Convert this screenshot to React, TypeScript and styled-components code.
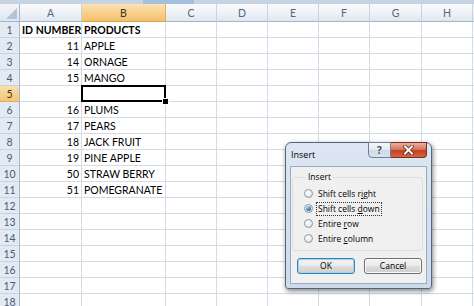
import React from "react";
import styled, { createGlobalStyle } from "styled-components";

const GlobalStyle = createGlobalStyle`
  html, body {
    margin: 0;
    padding: 0;
    background: #fff;
    overflow: hidden;
  }
`;

const COL_WIDTHS = [62, 84, 51, 51, 51, 51, 52, 51];
const LETTERS = ["A", "B", "C", "D", "E", "F", "G", "H"];
const ROW_COUNT = 18;

const DATA: Record<number, [string, string]> = {
  1: ["ID NUMBER", "PRODUCTS"],
  2: ["11", "APPLE"],
  3: ["14", "ORNAGE"],
  4: ["15", "MANGO"],
  6: ["16", "PLUMS"],
  7: ["17", "PEARS"],
  8: ["18", "JACK FRUIT"],
  9: ["19", "PINE APPLE"],
  10: ["50", "STRAW BERRY"],
  11: ["51", "POMEGRANATE"],
};

const Page = styled.div`
  position: relative;
  width: 474px;
  height: 306px;
  overflow: hidden;
  background: #fff;
  font-family: Lato, "Liberation Sans", sans-serif;
`;

const TopStrip = styled.div`
  height: 4px;
  display: flex;
  padding-left: 143px;
  background: #c8d3e1;
`;

const StripMark = styled.div`
  width: 51px;
  background: #a5bfdf;
`;

const Sheet = styled.div`
  display: grid;
  grid-template-columns: 20px ${COL_WIDTHS.map((w) => `${w}px`).join(" ")} 1fr;
  grid-template-rows: 18px;
  grid-auto-rows: 16px;
`;

const Corner = styled.div`
  box-sizing: border-box;
  background: linear-gradient(180deg, #f3f6fb 0%, #dfe6f0 100%);
  border-right: 1px solid #9eb6ce;
  border-bottom: 1px solid #9eb6ce;
  display: flex;
  align-items: flex-end;
  justify-content: flex-end;
  padding: 0 2px 2px 0;
`;

const ColHeader = styled.div<{ $active?: boolean }>`
  box-sizing: border-box;
  background: ${(p) =>
    p.$active
      ? "linear-gradient(180deg, #fbe2b4 0%, #f7cf88 55%, #f3c170 100%)"
      : "linear-gradient(180deg, #f8fafc 0%, #eef2f7 55%, #e1e7ef 100%)"};
  border-right: 1px solid ${(p) => (p.$active ? "#e0b060" : "#c9d3df")};
  border-bottom: 1px solid ${(p) => (p.$active ? "#d9a24a" : "#9eb6ce")};
  color: ${(p) => (p.$active ? "#3d3321" : "#55657b")};
  font-size: 10.5px;
  line-height: 18px;
  text-align: center;
`;

const RowHeader = styled.div<{ $active?: boolean }>`
  box-sizing: border-box;
  background: ${(p) =>
    p.$active
      ? "linear-gradient(180deg, #fbe0ae 0%, #f4c576 100%)"
      : "#e3eaf4"};
  border-right: 1px solid #9eb6ce;
  border-bottom: 1px solid ${(p) => (p.$active ? "#e0b060" : "#c6d3e3")};
  color: ${(p) => (p.$active ? "#3d3321" : "#4b5b71")};
  font-size: 10.5px;
  line-height: 16px;
  text-align: center;
`;

const Cell = styled.div<{ $right?: boolean; $bold?: boolean; $selected?: boolean }>`
  box-sizing: border-box;
  border-right: 1px solid #d4dae6;
  border-bottom: 1px solid #d4dae6;
  padding: 0 2px;
  font-size: 10.5px;
  line-height: 16px;
  color: #000;
  white-space: nowrap;
  text-align: ${(p) => (p.$right ? "right" : "left")};
  font-weight: ${(p) => (p.$bold ? 700 : 400)};
  position: ${(p) => (p.$selected ? "relative" : "static")};
  z-index: ${(p) => (p.$selected ? 2 : "auto")};

  ${(p) =>
    p.$selected &&
    `
    &::after {
      content: "";
      position: absolute;
      top: -1px;
      left: -1px;
      right: -1px;
      bottom: -1px;
      border: 2px solid #000;
    }
    &::before {
      content: "";
      position: absolute;
      right: -4px;
      bottom: -4px;
      width: 5px;
      height: 5px;
      background: #000;
      border: 1px solid #fff;
      z-index: 3;
    }
  `}
`;

/* ---------- dialog ---------- */

const Dialog = styled.div`
  position: absolute;
  left: 285px;
  top: 142px;
  width: 147px;
  box-sizing: border-box;
  border: 1px solid #56677d;
  border-radius: 6px 6px 3px 3px;
  background: linear-gradient(180deg, #dde7f3 0%, #cddaea 100%);
  padding: 0 4px 4px;
  box-shadow: 1px 2px 5px rgba(0, 0, 0, 0.5);
  font-family: "Open Sans", "Noto Sans", sans-serif;
  font-size: 8.5px;
  color: #000;
`;

const TitleBar = styled.div`
  height: 23px;
  display: flex;
  align-items: flex-start;
`;

const Title = styled.div`
  line-height: 23px;
  padding-left: 1px;
  font-size: 9px;
`;

const CaptionButtons = styled.div`
  margin-left: auto;
  margin-top: -1px;
  display: flex;
`;

const CapButton = styled.div<{ $kind: "help" | "close" }>`
  width: ${(p) => (p.$kind === "help" ? 23 : 36)}px;
  height: 16px;
  box-sizing: border-box;
  display: flex;
  align-items: center;
  justify-content: center;
  border: 1px solid ${(p) => (p.$kind === "help" ? "#6f7f95" : "#7b2c1d")};
  border-left-width: ${(p) => (p.$kind === "help" ? 1 : 0)}px;
  border-radius: ${(p) => (p.$kind === "help" ? "0 0 0 4px" : "0 0 4px 0")};
  background: ${(p) =>
    p.$kind === "help"
      ? "linear-gradient(180deg, #f4f7fb 0%, #e2e9f2 50%, #cfdae8 51%, #d9e3ef 100%)"
      : "linear-gradient(180deg, #eab0a0 0%, #d8765c 45%, #c3401f 55%, #d66444 100%)"};
  color: #3c4a5c;
  font-size: 10px;
  font-weight: 700;
  line-height: 1;
`;

const Client = styled.div`
  height: 118px;
  box-sizing: border-box;
  border: 1px solid #9aabc0;
  background: #f0f0f0;
  display: flex;
  flex-direction: column;
  padding: 4px 3px 0 0;
`;

const Group = styled.fieldset`
  margin: 0 0 0 1px;
  padding: 3px 0 4px 11px;
  border: 1px solid #d5dfe5;
  border-radius: 3px;
  min-width: 0;
`;

const GroupLegend = styled.legend`
  margin-left: 2px;
  padding: 0 2px;
  font-size: 8.5px;
  line-height: 12px;
`;

const OptionRow = styled.div`
  height: 15px;
  display: flex;
  align-items: center;
  gap: 3px;
`;

const Radio = styled.span<{ $checked?: boolean }>`
  width: 9px;
  height: 9px;
  box-sizing: border-box;
  border-radius: 50%;
  border: 1px solid #8d959d;
  background: radial-gradient(circle at 35% 30%, #ffffff 0%, #e9ebee 60%, #d3d6da 100%);
  display: flex;
  align-items: center;
  justify-content: center;

  &::after {
    content: "";
    display: ${(p) => (p.$checked ? "block" : "none")};
    width: 5px;
    height: 5px;
    border-radius: 50%;
    background: radial-gradient(circle at 35% 30%, #a6d6f5 0%, #3b83c0 50%, #174a7c 100%);
  }
`;

const OptionLabel = styled.span<{ $focused?: boolean }>`
  line-height: 12px;
  padding: 0 1px;
  border: 1px dotted ${(p) => (p.$focused ? "#333" : "transparent")};
  white-space: nowrap;
`;

const Key = styled.span`
  text-decoration: underline;
`;

const ButtonRow = styled.div`
  display: flex;
  gap: 9px;
  margin: 7px 0 0 6px;
`;

const PushButton = styled.div<{ $default?: boolean }>`
  width: 58px;
  height: 16px;
  box-sizing: border-box;
  border: 1px solid ${(p) => (p.$default ? "#3c7fb1" : "#707070")};
  border-radius: 3px;
  background: linear-gradient(180deg, #f2f2f2 0%, #ebebeb 50%, #dddddd 51%, #cfcfcf 100%);
  box-shadow: ${(p) => (p.$default ? "inset 0 0 0 1px #9cd6f2" : "inset 0 0 0 1px #fbfbfb")};
  text-align: center;
  line-height: 14px;
  font-size: 8.5px;
`;

const CornerTriangle = () => (
  <svg width="11" height="11" viewBox="0 0 11 11">
    <polygon points="11,0 11,11 0,11" fill="#b4c2d6" />
  </svg>
);

const CloseGlyph = () => (
  <svg width="11" height="10" viewBox="0 0 11 10">
    <path d="M2 1.5 L9 8.5 M9 1.5 L2 8.5" stroke="#5a1a0e" strokeWidth="3.4" strokeLinecap="square" />
    <path d="M2 1.5 L9 8.5 M9 1.5 L2 8.5" stroke="#ffffff" strokeWidth="2" strokeLinecap="square" />
  </svg>
);

export default function App() {
  const rows = Array.from({ length: ROW_COUNT }, (_, i) => i + 1);

  return (
    <Page>
      <GlobalStyle />
      <TopStrip>
        <StripMark />
      </TopStrip>
      <Sheet>
        <Corner>
          <CornerTriangle />
        </Corner>
        {LETTERS.map((l) => (
          <ColHeader key={l} $active={l === "B"}>
            {l}
          </ColHeader>
        ))}
        <ColHeader />
        {rows.map((r) => {
          const values = DATA[r];
          const isText = r === 1;
          return (
            <React.Fragment key={r}>
              <RowHeader $active={r === 5}>{r}</RowHeader>
              <Cell $right={!isText} $bold={isText}>
                {values ? values[0] : ""}
              </Cell>
              <Cell $bold={isText} $selected={r === 5}>
                {values ? values[1] : ""}
              </Cell>
              {LETTERS.slice(2).map((l) => (
                <Cell key={l} />
              ))}
              <Cell />
            </React.Fragment>
          );
        })}
      </Sheet>

      <Dialog>
        <TitleBar>
          <Title>Insert</Title>
          <CaptionButtons>
            <CapButton $kind="help">?</CapButton>
            <CapButton $kind="close">
              <CloseGlyph />
            </CapButton>
          </CaptionButtons>
        </TitleBar>
        <Client>
          <Group>
            <GroupLegend>Insert</GroupLegend>
            <OptionRow>
              <Radio />
              <OptionLabel>
                Shift cells r<Key>i</Key>ght
              </OptionLabel>
            </OptionRow>
            <OptionRow>
              <Radio $checked />
              <OptionLabel $focused>
                Shift cells <Key>d</Key>own
              </OptionLabel>
            </OptionRow>
            <OptionRow>
              <Radio />
              <OptionLabel>
                Entire <Key>r</Key>ow
              </OptionLabel>
            </OptionRow>
            <OptionRow>
              <Radio />
              <OptionLabel>
                Entire <Key>c</Key>olumn
              </OptionLabel>
            </OptionRow>
          </Group>
          <ButtonRow>
            <PushButton $default>OK</PushButton>
            <PushButton>Cancel</PushButton>
          </ButtonRow>
        </Client>
      </Dialog>
    </Page>
  );
}
